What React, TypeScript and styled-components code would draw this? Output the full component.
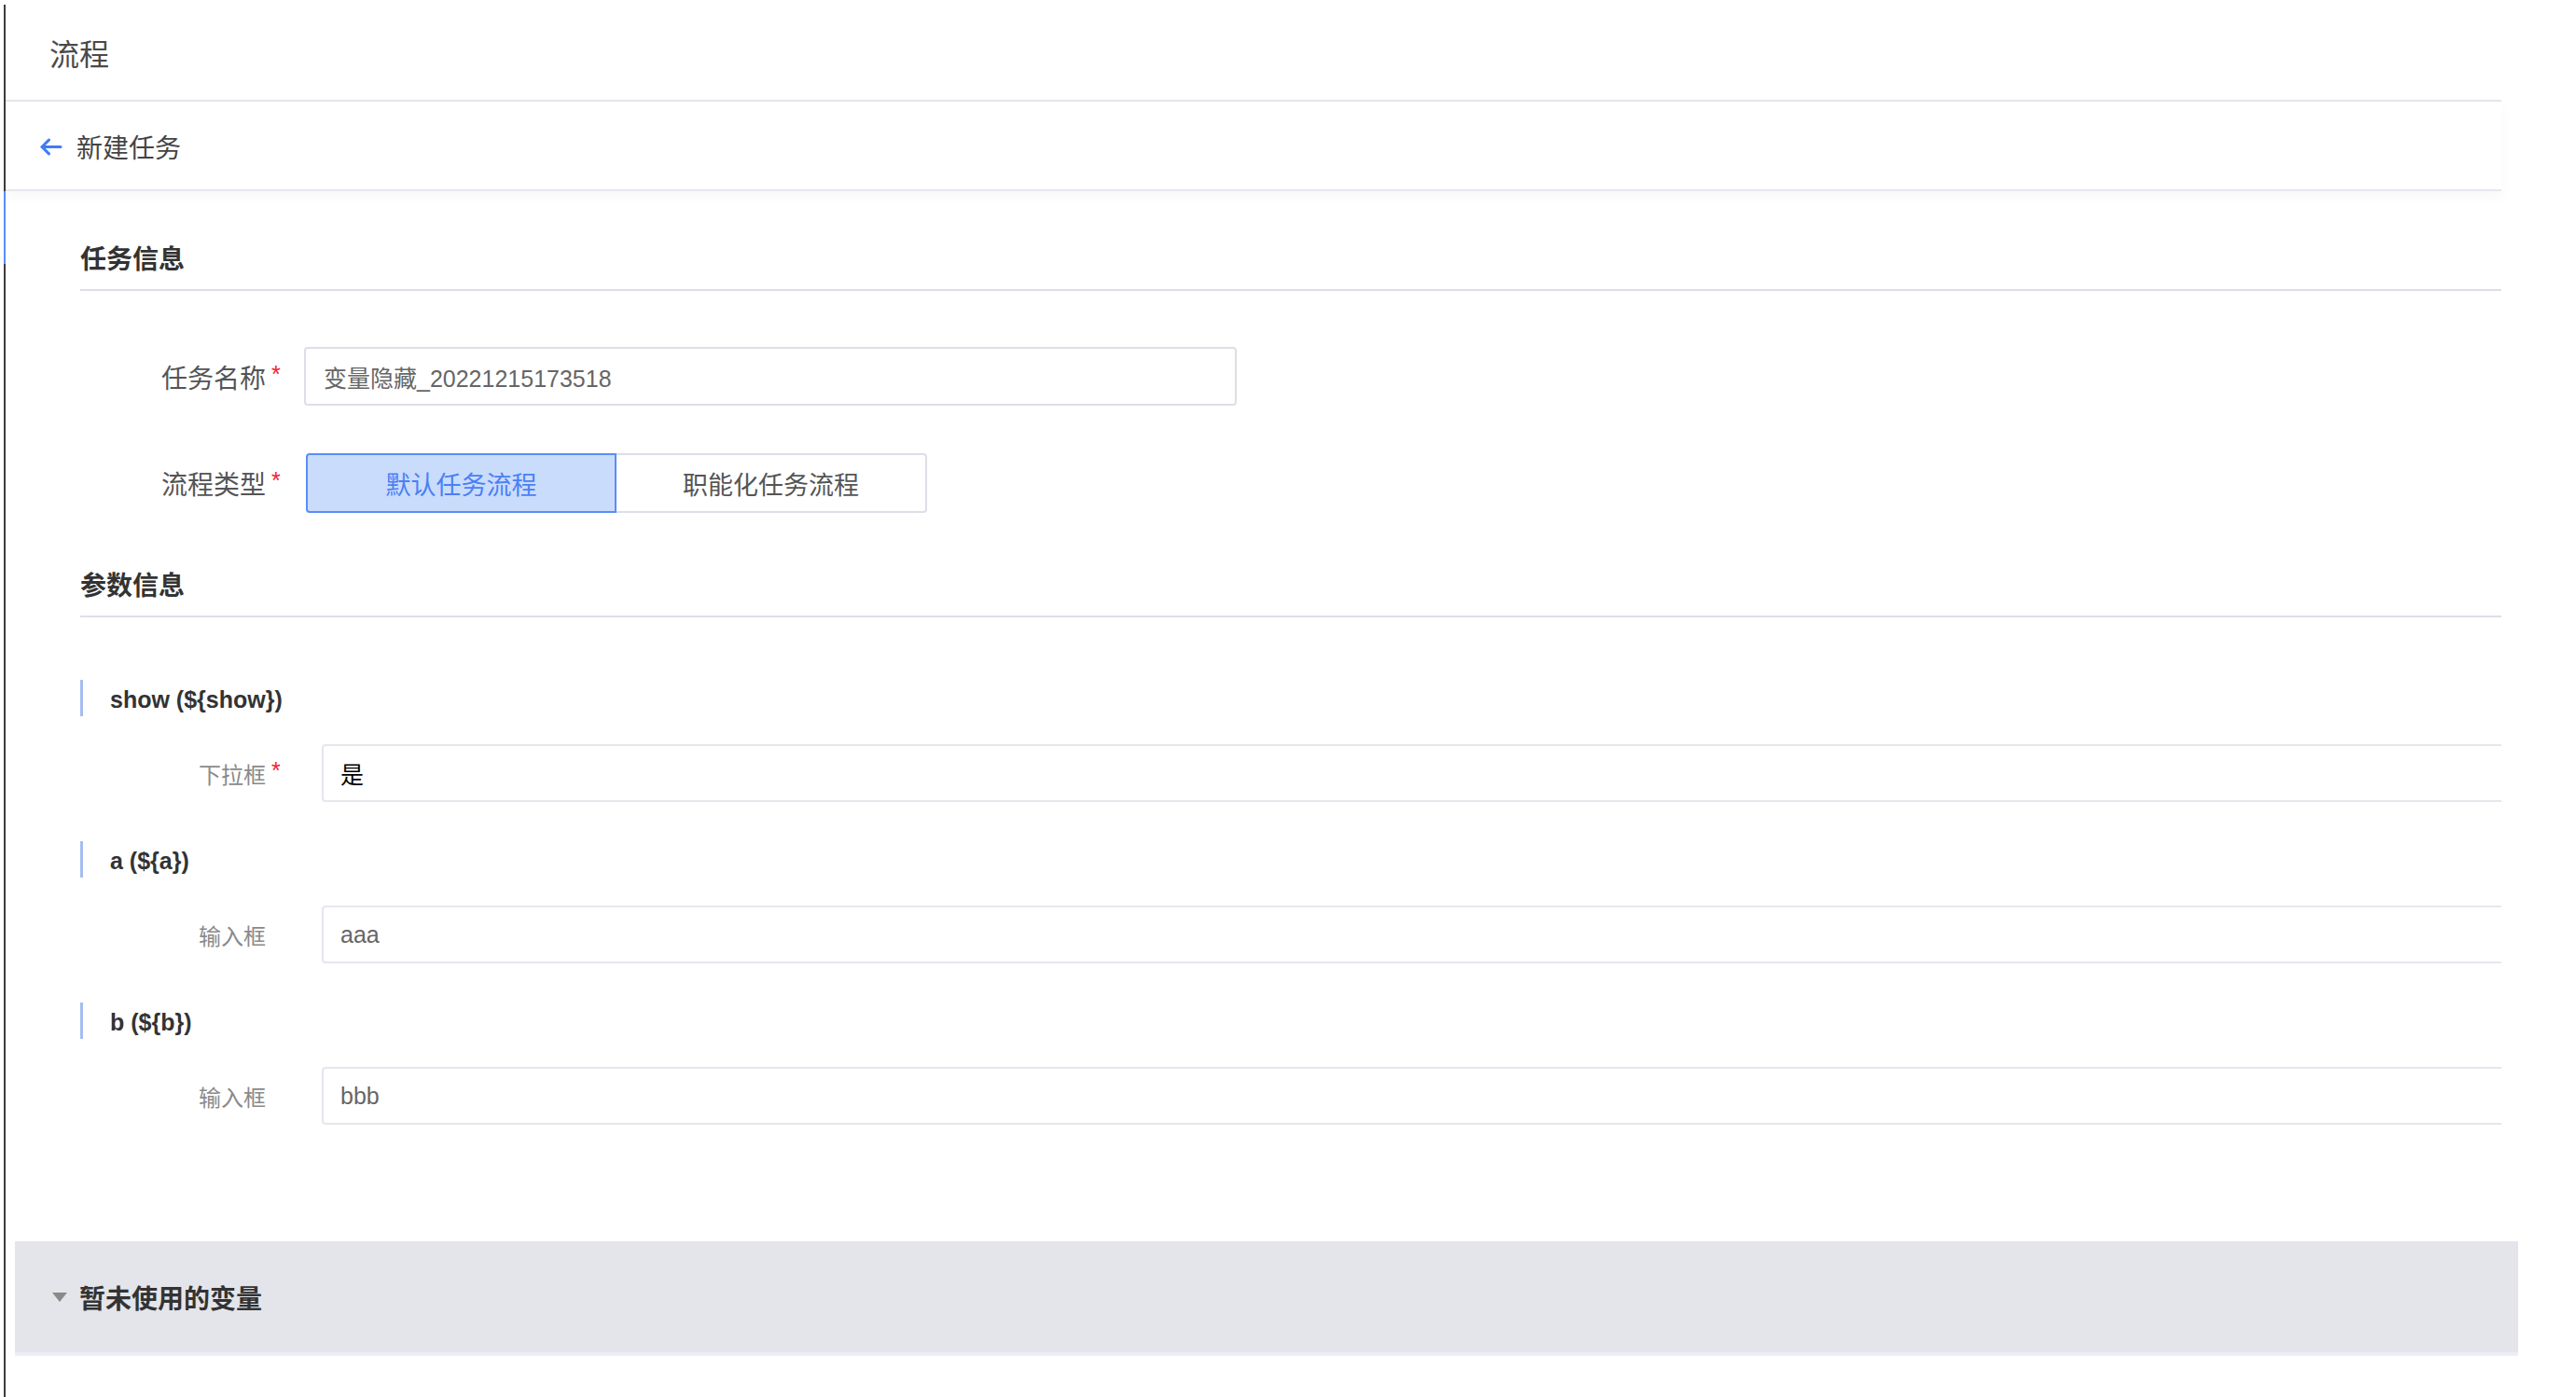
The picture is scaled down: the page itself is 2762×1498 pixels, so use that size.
import React from "react";
import styled, { createGlobalStyle } from "styled-components";

const GlobalStyle = createGlobalStyle`
  html, body {
    margin: 0;
    padding: 0;
    background: #fff;
  }
  body {
    font-family: "Liberation Sans", "Noto Sans CJK SC", sans-serif;
    color: #333;
  }
  * {
    box-sizing: border-box;
  }
`;

const Page = styled.div`
  display: flex;
  width: 2762px;
  height: 1498px;
  overflow: hidden;
`;

/* barra escura à esquerda, com o trecho azul ativo */
const Rail = styled.div`
  display: flex;
  flex-direction: column;
  flex-shrink: 0;
  width: 2px;
  margin: 5px 0 0 4px;
`;

const RailPiece = styled.div<{ $h?: number; $active?: boolean }>`
  width: 100%;
  height: ${(p) => (p.$h ? `${p.$h}px` : "auto")};
  flex: ${(p) => (p.$h ? "none" : 1)};
  background: ${(p) => (p.$active ? "#5b8ff9" : "#3c3c3c")};
`;

const Main = styled.div`
  display: flex;
  flex-direction: column;
  width: 2694px;
  flex-shrink: 0;
`;

const Header = styled.div`
  display: flex;
  align-items: center;
  width: 2676px;
  height: 109px;
  padding: 11px 0 0 47px;
  border-bottom: 2px solid #e4e6ec;
`;

const PageTitle = styled.h1`
  margin: 0;
  font-size: 32px;
  font-weight: 400;
  color: #4a4a4a;
  line-height: 1;
`;

const BackBar = styled.div`
  position: relative;
  display: flex;
  align-items: center;
  gap: 15px;
  width: 2676px;
  height: 96px;
  padding: 2px 0 0 36px;
  border-bottom: 2px solid #e6e8ee;
  box-shadow: 0 6px 12px rgba(40, 70, 140, 0.04);
  font-size: 28px;
  color: #444;
`;

const BackIcon = styled.svg`
  width: 25px;
  height: 19px;
  flex-shrink: 0;
`;

const Panel = styled.div`
  display: flex;
  flex-direction: column;
  width: 2676px;
  padding-left: 80px;
  overflow: hidden;
`;

const SectionTitle = styled.h2<{ $top: number }>`
  margin: ${(p) => p.$top}px 0 0;
  padding-bottom: 11px;
  font-size: 28px;
  font-weight: 700;
  line-height: 40px;
  color: #333;
  border-bottom: 2px solid #dcdfe6;
`;

const Row = styled.div<{ $top: number; $gap: number }>`
  display: flex;
  align-items: center;
  gap: ${(p) => p.$gap}px;
  margin-top: ${(p) => p.$top}px;
`;

const Label = styled.div<{ $size: number; $muted?: boolean }>`
  display: flex;
  justify-content: flex-end;
  align-items: center;
  width: 216px;
  flex-shrink: 0;
  font-size: ${(p) => p.$size}px;
  color: ${(p) => (p.$muted ? "#8a8a8a" : "#555")};
`;

const Star = styled.span`
  display: inline-block;
  width: 17px;
  padding-left: 6px;
  margin-top: -5px;
  font-size: 25px;
  line-height: 1;
  color: #f5222d;
`;

const TextInput = styled.div<{ $dark?: boolean }>`
  display: flex;
  align-items: center;
  width: 1000px;
  height: 63px;
  padding-left: 19px;
  border: 2px solid #dcdfe6;
  border-radius: 4px;
  font-size: 25px;
  color: ${(p) => (p.$dark ? "#000" : "#666")};
`;

const WideInput = styled(TextInput)`
  flex: 1;
  width: auto;
  height: 62px;
  padding-left: 18px;
  border-color: #e4e7ed;
  border-right: none;
  border-radius: 4px 0 0 4px;
`;

const Segmented = styled.div`
  display: flex;
`;

const SegButton = styled.div<{ $active?: boolean }>`
  display: flex;
  align-items: center;
  justify-content: center;
  width: 333px;
  height: 64px;
  font-size: 27px;
  border: 2px solid ${(p) => (p.$active ? "#5a8ef7" : "#dcdfe6")};
  border-left-width: ${(p) => (p.$active ? "2px" : "0")};
  border-radius: ${(p) => (p.$active ? "4px 0 0 4px" : "0 4px 4px 0")};
  background: ${(p) => (p.$active ? "#c9dcfb" : "#fff")};
  color: ${(p) => (p.$active ? "#4b7ff6" : "#555")};
`;

const ParamHeading = styled.div<{ $top: number }>`
  height: 39px;
  margin-top: ${(p) => p.$top}px;
  padding: 3px 0 0 29px;
  border-left: 3px solid #a4bdf0;
  font-size: 25px;
  font-weight: 700;
  line-height: 36px;
  color: #333;
`;

const UnusedBand = styled.div`
  display: flex;
  align-items: center;
  gap: 13px;
  width: 2684px;
  height: 123px;
  margin: 125px 0 0 10px;
  padding-left: 40px;
  background: #e4e5ea;
  border-bottom: 4px solid #eceef3;
  font-size: 28px;
  font-weight: 700;
  color: #333;
`;

const Caret = styled.span`
  width: 0;
  height: 0;
  border-left: 8px solid transparent;
  border-right: 8px solid transparent;
  border-top: 10px solid #8a8a8a;
`;

type Param = {
  title: string;
  label: string;
  value: string;
  required?: boolean;
  dark?: boolean;
};

const params: Param[] = [
  { title: "show (${show})", label: "下拉框", value: "是", required: true, dark: true },
  { title: "a (${a})", label: "输入框", value: "aaa" },
  { title: "b (${b})", label: "输入框", value: "bbb" },
];

export default function App() {
  return (
    <>
      <GlobalStyle />
      <Page>
        <Rail>
          <RailPiece $h={200} />
          <RailPiece $h={78} $active />
          <RailPiece />
        </Rail>
        <Main>
          <Header>
            <PageTitle>流程</PageTitle>
          </Header>
          <BackBar>
            <BackIcon viewBox="0 0 24 18" fill="none" stroke="#3f7cf7" strokeWidth="3" strokeLinecap="round" strokeLinejoin="round">
              <path d="M22 9H3" />
              <path d="M10 2L3 9l7 7" />
            </BackIcon>
            新建任务
          </BackBar>

          <Panel>
            <SectionTitle $top={54}>任务信息</SectionTitle>
            <Row $top={60} $gap={24}>
              <Label $size={28}>
                任务名称<Star>*</Star>
              </Label>
              <TextInput>变量隐藏_20221215173518</TextInput>
            </Row>
            <Row $top={51} $gap={26}>
              <Label $size={28}>
                流程类型<Star>*</Star>
              </Label>
              <Segmented>
                <SegButton $active>默认任务流程</SegButton>
                <SegButton>职能化任务流程</SegButton>
              </Segmented>
            </Row>

            <SectionTitle $top={59}>参数信息</SectionTitle>
            {params.map((p, i) => (
              <React.Fragment key={p.title}>
                <ParamHeading $top={i === 0 ? 67 : 42}>{p.title}</ParamHeading>
                <Row $top={30} $gap={43}>
                  <Label $size={24} $muted>
                    {p.label}
                    <Star>{p.required ? "*" : ""}</Star>
                  </Label>
                  <WideInput $dark={p.dark}>{p.value}</WideInput>
                </Row>
              </React.Fragment>
            ))}
          </Panel>

          <UnusedBand>
            <Caret />
            暂未使用的变量
          </UnusedBand>
        </Main>
      </Page>
    </>
  );
}
